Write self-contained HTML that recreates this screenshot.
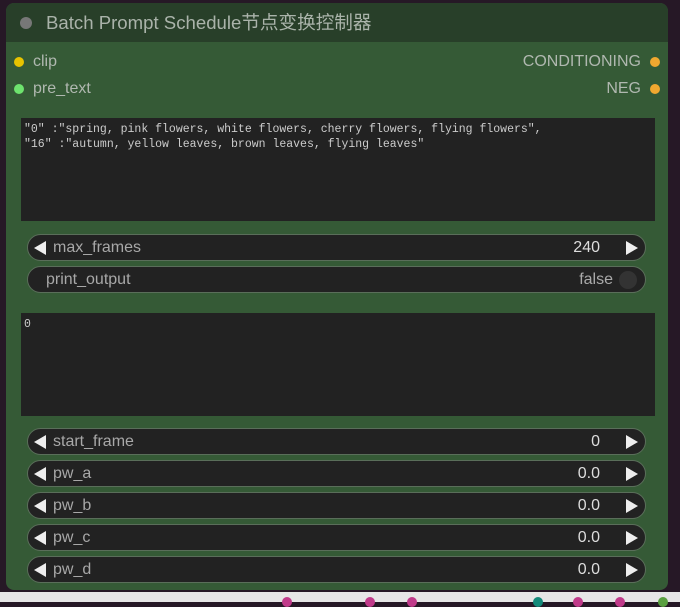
<!DOCTYPE html>
<html><head><meta charset="utf-8"><style>
*{box-sizing:border-box;margin:0;padding:0}
body{width:680px;height:602px;background:#261826;position:relative;overflow:hidden;font-family:"Liberation Sans","Noto Sans CJK SC",sans-serif}
.node{position:absolute;left:6px;top:3px;width:662px;height:587px;background:#355a36;border-radius:8px;overflow:hidden}
.title{height:39px;background:#283f29;color:#aab3aa;font-size:18.6px;line-height:39px;padding-left:40px;position:relative}
.title:before{content:"";position:absolute;left:14px;top:14px;width:12px;height:12px;border-radius:50%;background:#777}
.slot{position:absolute;font-size:16px;color:#b0b8b0}
.dot{position:absolute;width:10px;height:10px;border-radius:50%;top:4px}
.ta{position:absolute;left:15px;width:634px;height:103px;background:#222;font-family:"Liberation Mono","DejaVu Sans Mono",monospace;font-size:11.5px;color:#ccc;padding:4px 3px;line-height:15px;white-space:pre}
.w{position:absolute;left:21px;width:619px;height:27px;background:#222;border:1px solid #5a6e5a;border-radius:14px;color:#a8a8a8;font-size:16px;line-height:25px}
.w .l{position:absolute;left:25px}
.w .v{position:absolute;right:45px;color:#ddd}
.w .al{position:absolute;left:6px;top:6px;width:0;height:0;border-top:7px solid transparent;border-bottom:7px solid transparent;border-right:12px solid #eee}
.w .ar{position:absolute;right:7px;top:6px;width:0;height:0;border-top:7px solid transparent;border-bottom:7px solid transparent;border-left:12px solid #eee}
.bottom{position:absolute;left:0;top:592px;width:680px;height:10px;background:#e6e6e6}
.bd{position:absolute;top:597px;width:10px;height:10px;border-radius:50%}
</style></head><body>
<div class="node">
<div class="title">Batch Prompt Schedule节点变换控制器</div>
<div class="slot" style="left:27px;top:50px">clip</div><div class="dot" style="left:8px;top:54px;background:#e8c300"></div>
<div class="slot" style="left:27px;top:77px">pre_text</div><div class="dot" style="left:8px;top:81px;background:#6ee36e"></div>
<div class="slot" style="right:27px;top:50px">CONDITIONING</div><div class="dot" style="right:8px;top:54px;background:#f0a830"></div>
<div class="slot" style="right:27px;top:77px">NEG</div><div class="dot" style="right:8px;top:81px;background:#f0a830"></div>
<div class="ta" style="top:115px">"0" :"spring, pink flowers, white flowers, cherry flowers, flying flowers",
"16" :"autumn, yellow leaves, brown leaves, flying leaves"</div>
<div class="w" style="top:231px"><span class="al"></span><span class="l">max_frames</span><span class="v">240</span><span class="ar"></span></div>
<div class="w" style="top:263px"><span class="l" style="left:18px">print_output</span><span class="v" style="right:32px;color:#aaa">false</span><span style="position:absolute;right:8px;top:4px;width:18px;height:18px;border-radius:50%;background:#333"></span></div>
<div class="ta" style="top:310px">0</div>
<div class="w" style="top:425px"><span class="al"></span><span class="l">start_frame</span><span class="v">0</span><span class="ar"></span></div>
<div class="w" style="top:457px"><span class="al"></span><span class="l">pw_a</span><span class="v">0.0</span><span class="ar"></span></div>
<div class="w" style="top:489px"><span class="al"></span><span class="l">pw_b</span><span class="v">0.0</span><span class="ar"></span></div>
<div class="w" style="top:521px"><span class="al"></span><span class="l">pw_c</span><span class="v">0.0</span><span class="ar"></span></div>
<div class="w" style="top:553px"><span class="al"></span><span class="l">pw_d</span><span class="v">0.0</span><span class="ar"></span></div>
</div>
<div class="bottom"></div>
<div class="bd" style="left:282px;background:#c03a8a"></div>
<div class="bd" style="left:365px;background:#c03a8a"></div>
<div class="bd" style="left:407px;background:#c03a8a"></div>
<div class="bd" style="left:533px;background:#138a7a"></div>
<div class="bd" style="left:573px;background:#c03a8a"></div>
<div class="bd" style="left:615px;background:#c03a8a"></div>
<div class="bd" style="left:658px;background:#5aa040"></div>
</body></html>
